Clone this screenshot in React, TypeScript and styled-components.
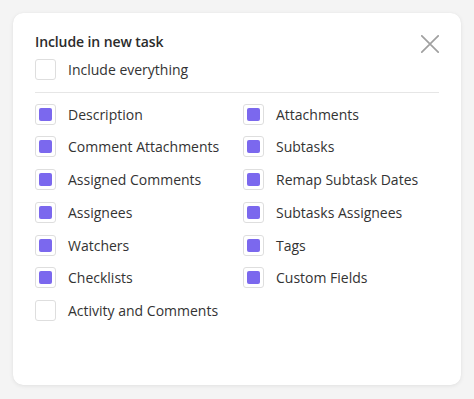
import React from 'react';
import styled, { createGlobalStyle } from 'styled-components';

const GlobalStyle = createGlobalStyle`
  html, body {
    margin: 0;
    padding: 0;
    background: #f4f4f4;
  }
  body {
    font-family: "Open Sans", "Liberation Sans", sans-serif;
    color: #333;
  }
`;

interface Option {
  label: string;
  checked: boolean;
}

const leftColumn: Option[] = [
  { label: 'Description', checked: true },
  { label: 'Comment Attachments', checked: true },
  { label: 'Assigned Comments', checked: true },
  { label: 'Assignees', checked: true },
  { label: 'Watchers', checked: true },
  { label: 'Checklists', checked: true },
  { label: 'Activity and Comments', checked: false },
];

const rightColumn: Option[] = [
  { label: 'Attachments', checked: true },
  { label: 'Subtasks', checked: true },
  { label: 'Remap Subtask Dates', checked: true },
  { label: 'Subtasks Assignees', checked: true },
  { label: 'Tags', checked: true },
  { label: 'Custom Fields', checked: true },
];

function CheckRow({ label, checked }: Option) {
  return (
    <Row>
      <Box $checked={checked} />
      <span>{label}</span>
    </Row>
  );
}

export default function App() {
  return (
    <>
      <GlobalStyle />
      <Page>
        <Card>
          <Header>
            <Title>Include in new task</Title>
            <CloseButton type="button" aria-label="Close">
              <svg width="18" height="18" viewBox="0 0 18 18" fill="none">
                <path d="M0.8 0.8L17.2 17.2M17.2 0.8L0.8 17.2" stroke="#a0a0a0" strokeWidth="1.7" strokeLinecap="round" />
              </svg>
            </CloseButton>
          </Header>
          <CheckRow label="Include everything" checked={false} />
          <Divider />
          <Columns>
            <Column>
              {leftColumn.map(o => <CheckRow key={o.label} {...o} />)}
            </Column>
            <Column>
              {rightColumn.map(o => <CheckRow key={o.label} {...o} />)}
            </Column>
          </Columns>
        </Card>
      </Page>
    </>
  );
}

const Page = styled.div`
  padding: 13px;
`;

const Card = styled.div`
  width: 448px;
  height: 372px;
  box-sizing: border-box;
  padding: 18px 22px 0 22px;
  background: #fff;
  border-radius: 10px;
  box-shadow: 0 1px 4px rgba(0, 0, 0, 0.08), 0 0 1px rgba(0, 0, 0, 0.06);
  display: flex;
  flex-direction: column;
`;

const Header = styled.div`
  display: flex;
  align-items: flex-start;
  justify-content: space-between;
  height: 22px;
`;

const Title = styled.div`
  font-size: 14px;
  font-weight: 600;
  line-height: 22px;
  letter-spacing: -0.1px;
  color: #2b2b2b;
`;

const CloseButton = styled.button`
  border: none;
  background: transparent;
  padding: 0;
  margin: 4px 0 0 0;
  cursor: pointer;
  display: flex;
`;

const Row = styled.label`
  display: flex;
  align-items: center;
  gap: 12px;
  height: 32.75px;
  font-size: 14px;
  color: #333;
  white-space: nowrap;
`;

const Box = styled.span<{ $checked: boolean }>`
  width: 21px;
  height: 21px;
  box-sizing: border-box;
  border: 1px solid #dedede;
  border-radius: 3px;
  display: flex;
  align-items: center;
  justify-content: center;
  flex-shrink: 0;

  &::after {
    content: '';
    width: 13px;
    height: 13px;
    border-radius: 2px;
    background: #7b68ee;
    display: ${props => (props.$checked ? 'block' : 'none')};
  }
`;

const Divider = styled.div`
  height: 1px;
  background: #e6e6e6;
  margin: 6px 0 5px 0;
`;

const Columns = styled.div`
  display: grid;
  grid-template-columns: 208px 1fr;
`;

const Column = styled.div`
  display: flex;
  flex-direction: column;
`;
